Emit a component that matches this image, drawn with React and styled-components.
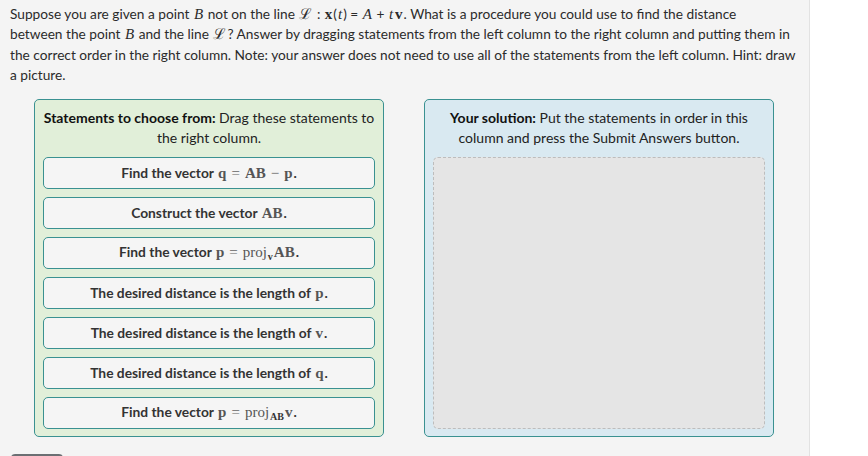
import React from 'react'
import styled, { createGlobalStyle } from 'styled-components'

const Global = createGlobalStyle`
  html, body {
    margin: 0;
    padding: 0;
    background: #ffffff;
  }
  body {
    font-family: Lato, "Noto Sans", sans-serif;
    color: #2b2b2b;
  }
`

const Page = styled.div`
  width: 810px;
  height: 456px;
  background: #f4f4f4;
  border-right: 1px solid #e2e2e2;
  padding: 4px 0 0 10px;
  box-sizing: border-box;
  overflow: hidden;
`

const Prompt = styled.p`
  margin: 0;
  font-size: 13.7px;
  line-height: 20.4px;
  white-space: nowrap;
`

const Columns = styled.div`
  display: flex;
  gap: 40px;
  margin: 13px 0 0 24px;
`

const Panel = styled.div`
  width: 350px;
  box-sizing: border-box;
  border: 1px solid #3a9191;
  border-radius: 5px;
  background: ${p => (p.$tone === 'info' ? '#d9e9f1' : '#e1efd9')};
  padding: 8px 8px 7px;
  display: flex;
  flex-direction: column;
  gap: 8px;
`

const Header = styled.div`
  text-align: center;
  font-size: 14px;
  line-height: 20px;
  color: #222;
  margin-bottom: 1px;

  b {
    font-weight: 700;
    color: #111;
  }
`

const Item = styled.div`
  height: 32px;
  box-sizing: border-box;
  border: 1px solid #3a9191;
  border-radius: 5px;
  background: #f5f5f5;
  display: flex;
  align-items: center;
  justify-content: center;
  font-size: 13.8px;
  font-weight: 700;
  color: #333;
`

const DropZone = styled.div`
  height: 272px;
  box-sizing: border-box;
  border: 1px dashed #bdbdbd;
  border-radius: 5px;
  background: #e5e5e5;
`

const M = styled.span`
  font-family: "Liberation Serif", "DejaVu Serif", serif;
  font-size: 15px;
  font-weight: ${p => (p.$b ? 700 : 400)};
  font-style: ${p => (p.$i ? 'italic' : 'normal')};
  color: ${p => (p.$g ? '#555' : 'inherit')};
  margin: 0 1px;
`

const Sub = styled.sub`
  font-family: "Liberation Serif", serif;
  font-weight: 700;
  font-size: 10px;
  vertical-align: -3px;
`

const Op = styled.span`
  font-family: "Liberation Serif", serif;
  font-size: 15px;
  font-weight: 400;
  color: #666;
  margin: 0 4px;
`

const Dark = styled.span`
  color: #333;
`

const Button = styled.div`
  width: 52px;
  height: 8px;
  margin: 17px 0 0 1px;
  background: #6b6f73;
  border-radius: 4px 4px 0 0;
`

const items = [
  <>Find the vector&nbsp;<M $b $g>q</M><Op>=</Op><M $b $g>AB</M><Op>−</Op><M $b $g>p</M>.</>,
  <>Construct the vector&nbsp;<M $b $g>AB</M>.</>,
  <>Find the vector&nbsp;<M $b $g>p</M><Op>=</Op><M $g>proj</M><Sub>v</Sub><M $b $g>AB</M>.</>,
  <>The desired distance is the length of&nbsp;<M $b $g>p</M>.</>,
  <>The desired distance is the length of&nbsp;<M $b $g>v</M>.</>,
  <>The desired distance is the length of&nbsp;<M $b $g>q</M>.</>,
  <>Find the vector&nbsp;<M $b $g>p</M><Op>=</Op><M $g>proj</M><Sub>AB</Sub><M $b $g>v</M>.</>,
]

export default function App () {
  return (
    <>
      <Global />
      <Page>
        <Prompt>
          Suppose you are given a point <M $i>B</M> not on the line <M>ℒ</M> : <M $b>x</M>(<M $i>t</M>) = <M $i>A</M> + <M $i>t</M><M $b>v</M>. What is a procedure you could use to find the distance<br />
          between the point <M $i>B</M> and the line <M>ℒ</M>? Answer by dragging statements from the left column to the right column and putting them in<br />
          the correct order in the right column. Note: your answer does not need to use all of the statements from the left column. Hint: draw<br />
          a picture.
        </Prompt>
        <Columns>
          <Panel>
            <Header><b>Statements to choose from:</b> Drag these statements to the right column.</Header>
            {items.map((it, i) => (
              <Item key={i}><Dark>{it}</Dark></Item>
            ))}
          </Panel>
          <Panel $tone="info">
            <Header><b>Your solution:</b> Put the statements in order in this column and press the Submit Answers button.</Header>
            <DropZone />
          </Panel>
        </Columns>
        <Button />
      </Page>
    </>
  )
}
